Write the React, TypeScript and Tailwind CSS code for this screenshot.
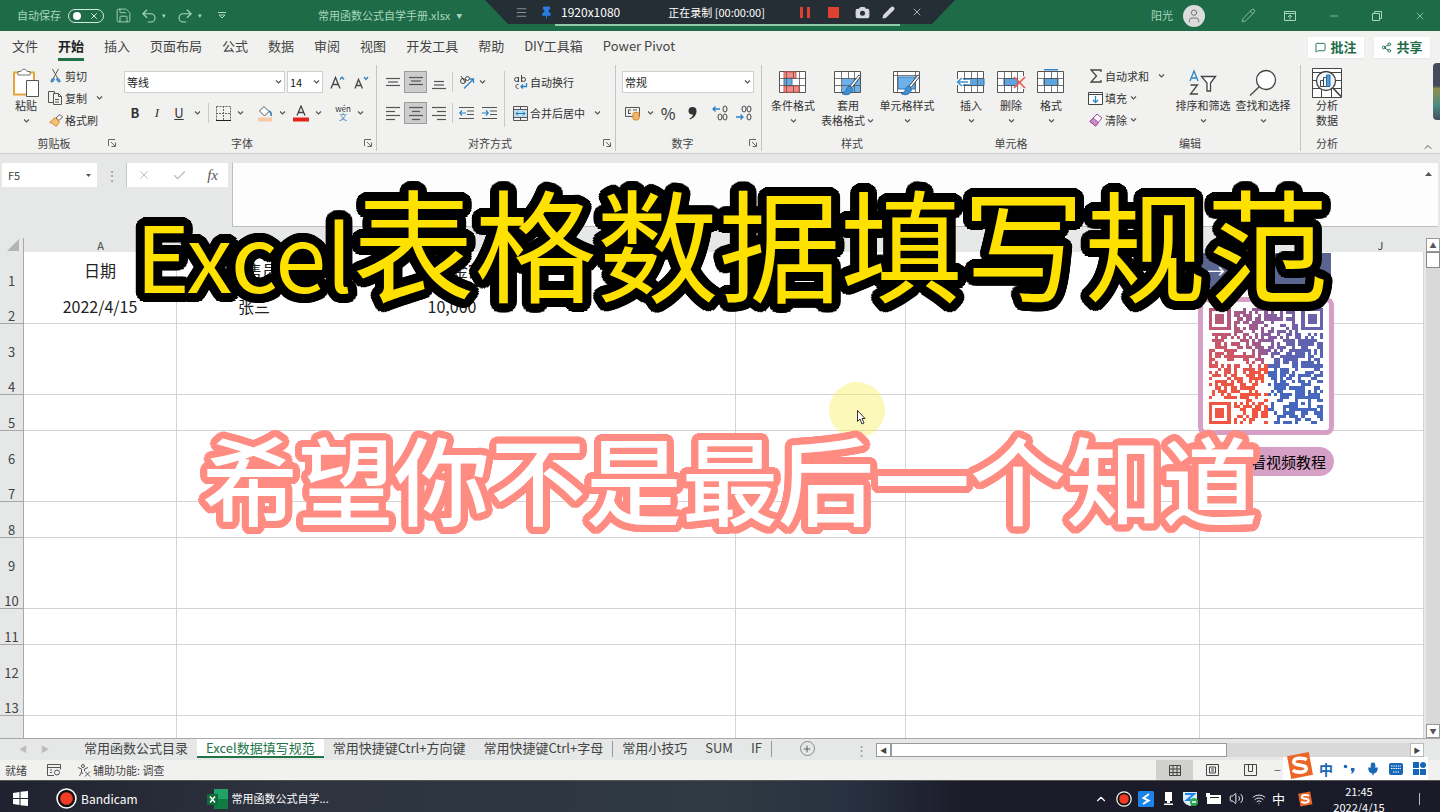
import type { ReactNode } from 'react';
import {
  Camera, Check, ChevronUp, Menu, MessageSquare, Mic, Minus, Pencil, Pin,
  Plus, Redo2, Save, Share2, Undo2, User, Volume2, Wifi, X,
} from 'lucide-react';

const MENU = ['文件', '开始', '插入', '页面布局', '公式', '数据', '审阅', '视图', '开发工具', '帮助', 'DIY工具箱', 'Power Pivot'];

/* ---------- small helpers ---------- */

function Chev({ className = 'w-3.5' }: { className?: string }) {
  return (
    <span className={`flex shrink-0 justify-center ${className}`}>
      <svg width="7" height="4" viewBox="0 0 7 4" fill="none" stroke="#555" strokeWidth="1.2">
        <path d="M1 .5 3.5 3 6 .5" />
      </svg>
    </span>
  );
}

function Tool({ label, w = 'w-5', active, children }: { label: string; w?: string; active?: boolean; children: ReactNode }) {
  return (
    <button
      aria-label={label}
      className={`flex h-[22px] shrink-0 items-center justify-center ${w} ${active ? 'border border-[#9b9b9b] bg-[#cdcdcd]' : ''}`}
    >
      {children}
    </button>
  );
}

function Combo({ label, value, w }: { label: string; value: string; w: string }) {
  return (
    <span className={`relative flex h-[22px] items-center border border-[#cfcfcf] bg-white ${w}`}>
      <select aria-label={label} className="h-full w-full appearance-none bg-transparent pl-0.5 text-[11px] text-[#222] outline-none">
        <option>{value}</option>
      </select>
      <span className="pointer-events-none absolute right-px">
        <Chev className="w-2.5" />
      </span>
    </span>
  );
}

function Group({ label, w, launcher, divider, children }: { label: string; w: string; launcher?: boolean; divider?: boolean; children: ReactNode }) {
  return (
    <section className={`flex shrink-0 py-0.5 ${w}`}>
      <div className="flex min-w-0 flex-1 flex-col">
        <div className="flex h-[72px] items-start">{children}</div>
        <div className="flex h-4 items-center text-[11px] text-[#444]">
          <span className="flex-1 text-center">{label}</span>
          {launcher && (
            <button aria-label={`${label}设置`} className="mr-1">
              <svg width="8" height="8" viewBox="0 0 8 8" fill="none" stroke="#666">
                <path d="M.5 7V.5H7M3 3l4 4M7.500 3.500v4h-4" />
              </svg>
            </button>
          )}
        </div>
      </div>
      {divider && <div className="w-px bg-[#c4c4c4]" />}
    </section>
  );
}

function Big({ icon, lines, w, caret = true }: { icon: ReactNode; lines: string[]; w: string; caret?: boolean }) {
  return (
    <button className={`flex shrink-0 flex-col items-center pt-0.5 text-[11px] leading-[15px] text-[#333] ${w}`}>
      <span className="flex h-[31px] items-center justify-center">{icon}</span>
      <span className="whitespace-nowrap">{lines[0]}</span>
      <span className="flex h-[15px] items-center whitespace-nowrap">
        {lines[1]}
        {caret && <Chev className="w-2.5" />}
      </span>
    </button>
  );
}

function Small({ icon, text, caret }: { icon: ReactNode; text: string; caret?: string }) {
  return (
    <button className="flex h-[22px] items-center whitespace-nowrap text-[11px] text-[#333]">
      <span className="flex w-[19px] justify-center">{icon}</span>
      {text}
      {caret && <Chev className={caret} />}
    </button>
  );
}

/* ---------- ribbon drawings ---------- */

function Lines({ rows }: { rows: [number, number, number][] }) {
  return (
    <svg width="14" height="16" viewBox="0 0 14 16" stroke="#555" strokeWidth="1.2">
      {rows.map(([x1, x2, y]) => <path key={y} d={`M${x1} ${y}H${x2}`} />)}
    </svg>
  );
}

const LEFT: [number, number, number][] = [[0, 14, 2.5], [0, 9, 6.5], [0, 14, 10.5], [0, 9, 14.5]];
const CENTER: [number, number, number][] = [[0, 14, 2.5], [3, 11, 6.5], [0, 14, 10.5], [3, 11, 14.5]];
const RIGHT: [number, number, number][] = [[0, 14, 2.5], [5, 14, 6.5], [0, 14, 10.5], [5, 14, 14.5]];

function Brush() {
  return (
    <>
      <path d="M28 7 19 18.500l-2-1.500L26 6z" fill="#fff" stroke="#444" />
      <path d="M17.500 17c-3 0-3.500 2-4.500 4.500-1 2-3 3-4 3 3 2 9 2 10.500-4z" fill="#3f8fd2" stroke="#2d6ea5" />
    </>
  );
}

function SheetIcon({ kind }: { kind: 'cond' | 'table' | 'style' | 'insert' | 'delete' | 'format' }) {
  return (
    <svg width="30" height="28" viewBox="0 0 30 28" fill="none" stroke="#555">
      <path d="M1.500 2.500h26v21h-26z" fill="#fff" />
      {kind === 'cond' && (
        <>
          <path d="M6 3h12v6H6zM6 17h15v6H6z" fill="#f58a83" stroke="#d65a52" />
          <path d="M6 9.500h8v7H6z" fill="#6aa7dd" stroke="#3878ae" />
        </>
      )}
      {kind === 'table' && <path d="M9 9h18v14H9z" fill="#6db1ea" stroke="none" />}
      {kind === 'style' && <path d="M6 8h17v12H6z" fill="#6db1ea" stroke="#2f79b8" />}
      {(kind === 'insert' || kind === 'delete') && <path d="M8 9.500h20v7H8z" fill="#5ea4de" stroke="#2c6fa9" />}
      {kind === 'format' && <path d="M8 9.500h14v7H8z" fill="#5ea4de" stroke="#2c6fa9" />}
      <path d={kind === 'style' ? 'M1.500 6.500h26M5.500 2.500v21M23.500 2.500v21' : 'M1.500 9.500h26M1.500 16.500h26M8.500 2.500v21M15.500 2.500v7M21.500 2.500v21M15.500 16.500v7'} strokeWidth=".8" />
      {(kind === 'table' || kind === 'style') && <Brush />}
      {kind === 'insert' && <path d="M14 13H1.500M6 8.500 1.500 13 6 17.500" stroke="#fff" strokeWidth="4" />}
      {kind === 'insert' && <path d="M12 13H1.500M6 9 1.500 13 6 17" stroke="#3d93d3" strokeWidth="1.600" />}
      {kind === 'delete' && <path d="M22 7h8v13h-8z" fill="#f1f1ef" stroke="none" />}
      {kind === 'delete' && <path d="m18 8 11 11M29 8 18 19" stroke="#e6635c" strokeWidth="1.700" />}
      {kind === 'format' && <path d="M8 .7h14" stroke="#2f86cc" strokeWidth="1.500" />}
    </svg>
  );
}

function PasteIcon() {
  return (
    <svg width="28" height="30" viewBox="0 0 28 30" fill="none">
      <path d="M2 4.500h20v22H2z" fill="#fff" stroke="#e8a33d" strokeWidth="2" />
      <path d="M6 7V3.500h3c0-3 6-3 6 0h3V7z" fill="#fff" stroke="#777" />
      <path d="M14.500 12.500h12v16h-12z" fill="#fff" stroke="#555" />
    </svg>
  );
}

function MergeIcon() {
  return (
    <svg width="15" height="15" viewBox="0 0 15 15" fill="none" stroke="#555">
      <path d="M.5.5h14v14H.5zM7.500 0v4M7.500 11v4M.5 3.500h14M.5 11.500h14" />
      <path d="M1 4h13v7H1z" fill="#bfe0f5" stroke="none" />
      <path d="M3 7.500h9M5 5.500l-2 2 2 2M10 5.500l2 2-2 2" stroke="#1f78b8" />
    </svg>
  );
}

function Indent({ out }: { out?: boolean }) {
  return (
    <svg width="15" height="14" viewBox="0 0 15 14" fill="none" stroke="#555" strokeWidth="1.2">
      <path d="M0 1.500h15M8 5h7M8 8.500h7M0 12.500h15" />
      <path d={out ? 'M7 7H.8M3 4.500.8 7 3 9.500' : 'M0 7h6M4 4.500 6.200 7 4 9.500'} stroke="#2c84c6" />
    </svg>
  );
}

function Decimal({ more }: { more?: boolean }) {
  return (
    <svg width="17" height="16" viewBox="0 0 17 16" fill="none" stroke="#444">
      <ellipse cx="13" cy="4" rx="2" ry="3" />
      {more && <ellipse cx="8" cy="4" rx="2" ry="3" />}
      <ellipse cx="13" cy="12" rx="2" ry="3" />
      {!more && <ellipse cx="8" cy="12" rx="2" ry="3" />}
      <path d={more ? 'M0 12h7M4.500 9.500 7 12l-2.500 2.500' : 'M8 4H1M3.500 1.500 1 4l2.500 2.500'} stroke="#2c84c6" strokeWidth="1.300" />
    </svg>
  );
}

function FontSize({ up }: { up?: boolean }) {
  return (
    <svg width="15" height="15" viewBox="0 0 15 15" fill="none" stroke="#444" strokeWidth="1.300">
      <path d={up ? 'M1 13.500 5.500 2.500l4.500 11M2.500 9.500h6' : 'M1 13.500 4.500 4.500l4 9M2.500 10.500h4.500'} />
      <path d={up ? 'm10 4.500 2-2.500 2 2.500' : 'm10 2 2 2.500L14 2'} stroke="#3c7fb8" />
    </svg>
  );
}

/* ---------- ribbon ---------- */

function Ribbon() {
  return (
    <div className="relative flex h-[91px] overflow-hidden border-b border-[#cfcfcd] bg-[#f1f1ef]">
      <Group label="剪贴板" w="w-[120px]" launcher>
        <div className="pl-2"><Big w="w-9" icon={<PasteIcon />} lines={['粘贴']} /></div>
        <div className="flex flex-col pl-0.5">
          <Small
            text="剪切"
            icon={
              <svg width="11" height="14" viewBox="0 0 11 14" fill="none" stroke="#555">
                <path d="m2.500 0 5 9M8.500 0l-5 9" />
                <path d="M1 13c0-3 2-4 3-3.500S4 13 1 13zM10 13c0-3-2-4-3-3.500S7 13 10 13z" fill="#5b9bd5" stroke="#2f74b5" />
              </svg>
            }
          />
          <Small
            text="复制"
            caret="w-6"
            icon={
              <svg width="15" height="14" viewBox="0 0 15 14" fill="none" stroke="#555">
                <path d="M5 11.500H.5V.5h6V3M5.500 2.500h5l3 3v8h-8zM10.500 2.500v3h3M7 8.500h4M7 11h4" />
              </svg>
            }
          />
          <Small
            text="格式刷"
            icon={
              <svg width="14" height="13" viewBox="0 0 14 13" fill="none" stroke="#555">
                <path d="m7 4 4-3.500L13.500 3 10 6.500z" fill="#fff" />
                <path d="M6 3.500 10.500 8 7 12.500C5 10 3 9 .7 8.500z" fill="#f6c07a" stroke="#d98a25" />
              </svg>
            }
          />
        </div>
      </Group>

      <Group label="字体" w="w-[257px]" launcher divider>
        <div className="flex flex-col gap-[9px] pt-1.5 pl-1">
          <div className="flex items-center">
            <Combo label="字体" value="等线" w="w-[161px]" />
            <span className="ml-0.5"><Combo label="字号" value="14" w="w-[36px]" /></span>
            <span className="ml-0.5 flex">
              <Tool label="增大字号" w="w-6"><FontSize up /></Tool>
              <Tool label="减小字号" w="w-6"><FontSize /></Tool>
            </span>
          </div>
          <div className="flex items-center text-[13px] text-[#333]">
            <Tool label="加粗" w="w-[22px]"><b>B</b></Tool>
            <Tool label="倾斜" w="w-[22px]"><i className="font-['Liberation_Serif']">I</i></Tool>
            <Tool label="下划线" w="w-[22px]"><u>U</u></Tool>
            <Chev />
            <span className="mx-1 h-5 w-px bg-[#cacaca]" />
            <Tool label="边框">
              <svg width="15" height="15" viewBox="0 0 15 15" fill="none" stroke="#666">
                <path d="M.5.5h14v14H.5zM7.500 0v15M0 7.500h15" strokeDasharray="2 1" />
                <path d="M0 14.500h15" stroke="#222" />
              </svg>
            </Tool>
            <Chev />
            <span className="ml-2" />
            <Tool label="填充颜色">
              <svg width="16" height="17" viewBox="0 0 16 17" fill="none" stroke="#555">
                <path d="M7 1.500 12 6.500 7.500 11 2.500 6z" fill="#fff" />
                <path d="M12 6c2 1 2.500 3 2 5" stroke="#2f79b8" strokeWidth="1.500" />
                <path d="M1 12.500h14v4H1z" fill="#f9c9a4" stroke="none" />
              </svg>
            </Tool>
            <Chev />
            <span className="ml-0.5" />
            <Tool label="字体颜色">
              <svg width="16" height="17" viewBox="0 0 16 17" fill="none" stroke="#444" strokeWidth="1.300">
                <path d="M4 10.500 8 1l4 9.500M5.500 7.500h5" />
                <path d="M0 12.500h16v4H0z" fill="#e02418" stroke="none" />
              </svg>
            </Tool>
            <Chev />
            <span className="ml-2" />
            <Tool label="拼音指南">
              <span className="flex flex-col items-center text-[8px] leading-[8px]">
                <span>wén</span>
                <span className="text-[#3b86c4]">文</span>
              </span>
            </Tool>
            <Chev />
          </div>
        </div>
      </Group>

      <Group label="对齐方式" w="w-[239px]" launcher divider>
        <div className="flex w-[127px] flex-col gap-[9px] pt-1.5 pl-1">
          <div className="flex items-center">
            <Tool label="顶端对齐" w="w-[23px]"><Lines rows={[[0, 14, 4.5], [2, 12, 8], [0, 14, 11.5]]} /></Tool>
            <Tool label="垂直居中" w="w-[23px]" active><Lines rows={[[0, 14, 3.5], [2, 12, 7], [0, 14, 10.5]]} /></Tool>
            <Tool label="底端对齐" w="w-[23px]"><Lines rows={[[2, 12, 7.5], [2, 12, 11], [0, 14, 14.5]]} /></Tool>
            <span className="mx-0.5 h-5 w-px bg-[#cacaca]" />
            <Tool label="方向" w="w-[23px]">
              <svg width="16" height="16" viewBox="0 0 16 16" fill="none" stroke="#444">
                <circle cx="4" cy="7" r="2.500" />
                <path d="m2 2 4.500 6.500" />
                <circle cx="8.500" cy="4.500" r="2" />
                <path d="M5 14.500 14 5.500M14.500 9V5H11" stroke="#2c84c6" strokeWidth="1.300" />
              </svg>
            </Tool>
            <Chev className="w-2" />
          </div>
          <div className="flex items-center">
            <Tool label="左对齐" w="w-[23px]"><Lines rows={LEFT} /></Tool>
            <Tool label="居中" w="w-[23px]" active><Lines rows={CENTER} /></Tool>
            <Tool label="右对齐" w="w-[23px]"><Lines rows={RIGHT} /></Tool>
            <span className="mx-0.5 h-5 w-px bg-[#cacaca]" />
            <Tool label="减少缩进量" w="w-[23px]"><Indent out /></Tool>
            <Tool label="增加缩进量" w="w-[23px]"><Indent /></Tool>
          </div>
        </div>
        <div className="mt-1.5 h-14 w-px bg-[#cacaca]" />
        <div className="flex flex-col gap-[9px] pt-1.5 pl-1.5">
          <Small
            text="自动换行"
            icon={
              <svg width="14" height="15" viewBox="0 0 14 15" fill="none" stroke="#444">
                <circle cx="2.500" cy="4.500" r="2" />
                <path d="M4.500 2v5M7.500 0v7" />
                <circle cx="9.500" cy="4.500" r="2" />
                <path d="M4.500 9.500c-3-1-4 4 0 4" />
                <path d="M12.500 8v3.500H7M9 9.500l-2 2 2 2" stroke="#2c84c6" strokeWidth="1.300" />
              </svg>
            }
          />
          <Small text="合并后居中" icon={<MergeIcon />} caret="w-6" />
        </div>
      </Group>

      <Group label="数字" w="w-[146px]" launcher divider>
        <div className="flex flex-col gap-[9px] pt-1.5 pl-1.5">
          <Combo label="数字格式" value="常规" w="w-[132px]" />
          <div className="flex items-center text-[#333]">
            <Tool label="会计数字格式" w="w-[22px]">
              <svg width="16" height="15" viewBox="0 0 16 15" fill="none" stroke="#555">
                <path d="M.5 1.500h14v9H.5zM3 4h3M3 7.500h3M3.500 4v3.500M8 4h4" />
                <path d="M8 7.500v5c0 2 6 2 6 0v-5c0-1.500-6-1.500-6 0z" fill="#f2b36d" stroke="#d98a25" />
              </svg>
            </Tool>
            <Chev className="w-3" />
            <Tool label="百分比样式" w="w-6"><span className="text-base">%</span></Tool>
            <Tool label="千位分隔样式" w="w-6">
              <svg width="9" height="13" viewBox="0 0 9 13"><path d="M4.500 0a4 4 0 0 1 4 4c0 4-2.500 7-6.500 8.500l-.5-1C3.500 10.500 5 9 5 7.500 2 8 .5 6 .5 4a4 4 0 0 1 4-4z" fill="#333" /></svg>
            </Tool>
            <span className="ml-1" />
            <Tool label="增加小数位数" w="w-6"><Decimal /></Tool>
            <Tool label="减少小数位数" w="w-6"><Decimal more /></Tool>
          </div>
        </div>
      </Group>

      <Group label="样式" w="w-[180px]">
        <div className="flex pl-[3px]">
          <Big w="w-14" icon={<SheetIcon kind="cond" />} lines={['条件格式']} />
          <Big w="w-[54px]" icon={<SheetIcon kind="table" />} lines={['套用', '表格格式']} />
          <span className="ml-0.5"><Big w="w-[60px]" icon={<SheetIcon kind="style" />} lines={['单元格样式']} /></span>
        </div>
      </Group>

      <Group label="单元格" w="w-[138px]">
        <div className="flex pl-[9px]">
          <Big w="w-10" icon={<SheetIcon kind="insert" />} lines={['插入']} />
          <Big w="w-10" icon={<SheetIcon kind="delete" />} lines={['删除']} />
          <Big w="w-10" icon={<SheetIcon kind="format" />} lines={['格式']} />
        </div>
      </Group>

      <Group label="编辑" w="w-[221px]" divider>
        <div className="flex flex-col pl-1.5">
          <Small
            text="自动求和"
            caret="w-6"
            icon={<svg width="12" height="14" viewBox="0 0 12 14" fill="none" stroke="#444" strokeWidth="1.300"><path d="M11 3V1H1l5.500 6L1 13h10v-2" /></svg>}
          />
          <Small
            text="填充"
            caret="w-3"
            icon={
              <svg width="15" height="13" viewBox="0 0 15 13" fill="none" stroke="#444">
                <path d="M.5.5h14v12H.5zM.5 2.500h14" fill="#fff" />
                <path d="M7.500 4v6M5 8l2.500 2.500L10 8" stroke="#2c84c6" strokeWidth="1.300" />
              </svg>
            }
          />
          <Small
            text="清除"
            caret="w-3"
            icon={
              <svg width="14" height="14" viewBox="0 0 14 14" fill="none" stroke="#a0479f">
                <path d="m8 1 5 4-6.500 8L1 8.500z" fill="#fff" />
                <path d="M4 5 1 8.500 6.500 13l3-3.500z" fill="#c98fcb" />
              </svg>
            }
          />
        </div>
        <div className="flex">
          <Big
            w="w-[60px]"
            lines={['排序和筛选']}
            icon={
              <svg width="30" height="28" viewBox="0 0 30 28" fill="none" stroke="#444" strokeWidth="1.300">
                <path d="m2 12 4-10 4 10M3.500 9h5" stroke="#2c84c6" />
                <path d="M2.500 16h7l-7 9h7.500" />
                <path d="M13.500 7.500h14l-5 6.500v8h-3.500v-8z" fill="#fff" />
              </svg>
            }
          />
          <Big
            w="w-[60px]"
            lines={['查找和选择']}
            icon={
              <svg width="30" height="28" viewBox="0 0 30 28" fill="none" stroke="#444" strokeWidth="1.300">
                <circle cx="18" cy="11" r="9.500" fill="#fff" />
                <path d="M11 18 2 26.500" />
              </svg>
            }
          />
        </div>
      </Group>

      <Group label="分析" w="w-[52px]">
        <Big
          w="w-[52px]"
          lines={['分析', '数据']}
          caret={false}
          icon={
            <svg width="30" height="30" viewBox="0 0 30 30" fill="none" stroke="#444">
              <path d="M.5.5h29v29H.5z" fill="#fff" />
              <path d="M.5 4.500h29M.5 12.500h29M.5 20.500h29M9.500 20v9M19.500 20v9" />
              <circle cx="14" cy="13" r="9.500" fill="#f4f7fa" strokeWidth="1.300" />
              <path d="m21 20 8 8.500" strokeWidth="1.800" />
              <path d="M8.500 12.500h3v6h-3zM11.500 9.500h3v9h-3z" />
              <path d="M14.500 7h3.500v11.500h-3.500z" fill="#4f9bd9" stroke="#2c6fa9" />
            </svg>
          }
        />
      </Group>

      <button aria-label="折叠功能区" className="mt-auto mr-1.5 ml-auto text-[#555]"><ChevronUp size={12} /></button>
      <div className="absolute top-0 right-0 h-[57px] w-[7px] rounded-l bg-[linear-gradient(#444b5c_40%,#8f8f4d_45%,#4a8a84_75%,#444b5c)]" />
    </div>
  );
}

/* ---------- title bar ---------- */

function Recorder() {
  return (
    <div className="absolute top-0 left-1/2 w-[470px] -translate-x-1/2 text-white">
      <div className="flex h-6 items-center bg-[#252d35] pr-8 pl-[30px] text-[11px] [clip-path:polygon(0_0,100%_0,calc(100%-23px)_100%,23px_100%)]">
        <Menu size={13} className="text-[#89929a]" />
        <Pin size={13} className="ml-3 fill-[#2c7de0] text-[#2c7de0]" />
        <span className="ml-2 text-xs">1920x1080</span>
        <span className="ml-12 whitespace-nowrap">正在录制 [00:00:00]</span>
        <button aria-label="暂停" className="ml-auto flex gap-1"><span className="h-[11px] w-[3px] bg-[#e0402f]" /><span className="h-[11px] w-[3px] bg-[#e0402f]" /></button>
        <button aria-label="停止" className="ml-[18px] size-[11px] bg-[#e0402f]" />
        <button aria-label="截图" className="ml-4"><Camera size={15} className="fill-[#d6dade] text-[#d6dade] [&>circle]:fill-[#252d35] [&>circle]:stroke-[#252d35]" /></button>
        <button aria-label="画笔" className="ml-3"><Pencil size={13} className="fill-[#d6dade] text-[#d6dade]" /></button>
        <button aria-label="关闭录制" className="ml-4 text-[#a9b0b6]"><X size={12} /></button>
      </div>
      <div className="mr-[55px] ml-[70px] h-0.5 bg-[#8fcaa9]" />
    </div>
  );
}

function TitleBar() {
  return (
    <header className="relative flex h-[31px] items-center overflow-hidden bg-[#1d6b47] text-[11px] text-[#a9d6bd]">
      <div className="flex items-center pl-[17px]">
        <label htmlFor="autosave">自动保存</label>
        <span className="relative ml-[7px] flex h-[14px] w-9 items-center justify-between rounded-full border border-[#d5eadf] px-1 text-white">
          <input id="autosave" type="checkbox" className="absolute inset-0 appearance-none" />
          <span className="size-2 rounded-full bg-white" />
          <X size={10} />
        </span>
        <button aria-label="保存" className="ml-[11px]"><Save size={17} strokeWidth={1.3} /></button>
        <button aria-label="撤消" className="ml-2"><Undo2 size={18} strokeWidth={1.5} /></button>
        <span className="ml-1 text-[7px]">▾</span>
        <button aria-label="恢复" className="ml-2.5"><Redo2 size={18} strokeWidth={1.5} /></button>
        <span className="ml-1 text-[7px]">▾</span>
        <svg className="ml-4" width="8" height="7" viewBox="0 0 8 7" fill="none" stroke="currentColor"><path d="M0 .5h8M1 3h6L4 6z" /></svg>
      </div>
      <span className="ml-[92px] whitespace-nowrap">常用函数公式自学手册.xlsx</span>
      <span className="ml-1.5 text-[6px]">▼</span>
      <Recorder />
      <div className="ml-auto flex items-center pr-3.5">
        <span>阳光</span>
        <span className="ml-2.5 flex size-[22px] items-center justify-center rounded-full bg-[#dcdcdc] text-[#666]"><User size={16} strokeWidth={1.3} /></span>
        <Pencil size={15} strokeWidth={1.2} className="ml-9" />
        <svg className="ml-7" width="12" height="10" viewBox="0 0 12 10" fill="none" stroke="currentColor"><path d="M.5.5h11v9H.5zM.5 2.500h11M6 8.500v-4M4 6l2-2 2 2" /></svg>
        <button aria-label="最小化" className="ml-8"><Minus size={12} strokeWidth={1.5} /></button>
        <button aria-label="还原" className="ml-8">
          <svg width="10" height="10" viewBox="0 0 10 10" fill="none" stroke="currentColor"><path d="M.5 2.500h7v7h-7zM2.500 2V.5h7v7H8" /></svg>
        </button>
        <button aria-label="关闭" className="ml-8"><X size={12} strokeWidth={1.5} /></button>
      </div>
    </header>
  );
}

function MenuBar() {
  return (
    <nav className="flex h-8 items-center gap-5 bg-[#f1f1ef] pr-2.5 pl-3 text-[13px] text-[#444]">
      {MENU.map((m) => (
        <button key={m} className={`h-7 whitespace-nowrap border-b-[3px] ${m === '开始' ? 'border-[#217346] font-bold text-[#222]' : 'border-transparent'}`}>
          {m}
        </button>
      ))}
      <div className="ml-auto flex gap-2.5 font-bold text-[#1d6b47]">
        <button className="flex h-[21px] w-14 items-center justify-center gap-1 bg-white shadow-xs"><MessageSquare size={11} />批注</button>
        <button className="flex h-[21px] w-14 items-center justify-center gap-1 bg-white shadow-xs"><Share2 size={11} />共享</button>
      </div>
    </nav>
  );
}

function FormulaBar() {
  return (
    <div className="flex items-start bg-[#e6e8e7] pt-[9px] pr-0.5 pb-[11px] pl-0.5 text-[11px]">
      <div className="relative">
        <input aria-label="名称框" defaultValue="F5" className="h-6 w-[95px] bg-white pl-1.5 text-[#444] outline-none" />
        <svg className="absolute top-[11px] right-1.5" width="5" height="3" viewBox="0 0 5 3"><path d="M0 0h5L2.500 3z" fill="#555" /></svg>
      </div>
      <span className="flex h-6 w-[29px] items-center justify-center text-sm text-[#999]">⋮</span>
      <div className="flex h-6 w-[102px] items-center justify-between border-l border-[#c5c5c5] bg-white px-2.5 text-[#b5b5b5]">
        <button aria-label="取消"><X size={14} strokeWidth={1.5} /></button>
        <button aria-label="输入"><Check size={15} strokeWidth={1.8} /></button>
        <button aria-label="插入函数" className="font-['Liberation_Serif'] text-[15px] text-[#555] italic">fx</button>
      </div>
      <div className="relative ml-1 flex-1">
        <textarea aria-label="编辑栏" className="block h-16 w-full resize-none border-b border-l border-[#bdbdbd] bg-[#fdfdfd] outline-none" />
        <svg className="absolute top-[9px] right-1.5" width="7" height="4" viewBox="0 0 7 4"><path d="M0 4 3.500 0 7 4z" fill="#555" /></svg>
      </div>
    </div>
  );
}

/* ---------- sheet ---------- */

const CELLS: Record<number, string[]> = {
  1: ['日期', '销售员', '销售金额'],
  2: ['2022/4/15', '张三', '10,000'],
};
const COLUMNS = ['A', '', '', '', '', '', '', 'J'];
// rows whose lower edge carries no grid line
const OPEN_ROWS = [3, 6, 9, 12];
const BORDERED = [0, 3, 4, 5, 7];

function Sheet() {
  return (
    <table className="w-full table-fixed border-separate border-spacing-0 bg-white text-center text-base leading-none text-[#222]">
      <colgroup>
        <col className="w-6" />
        <col className="w-[153px]" />
        <col className="w-[154px]" />
        <col className="w-[242px]" />
        <col className="w-[163px]" />
        <col className="w-[170px]" />
        <col className="w-[294px]" />
        <col className="w-[137px]" />
        <col />
      </colgroup>
      <thead>
        <tr className="bg-[#e6e8e7] text-[11px] text-[#444]">
          <th className="h-[14px] border-r border-[#a8a8a8] p-0">
            <svg className="ml-auto mr-1" width="12" height="12" viewBox="0 0 12 12"><path d="M12 0v12H0z" fill="#b4b4b4" /></svg>
          </th>
          {COLUMNS.map((c, i) => <th key={i} scope="col" className="p-0 font-normal leading-[14px]">{c}</th>)}
        </tr>
      </thead>
      <tbody>
        {Array.from({ length: 14 }, (_, i) => i + 1).map((r) => {
          const line = r > 1 && r < 14 && !OPEN_ROWS.includes(r);
          const height = r === 14 ? 'h-[22px]' : OPEN_ROWS.includes(r) ? 'h-[35px]' : 'h-9';
          return (
            <tr key={r} className={height}>
              <th scope="row" className={`border-r border-[#a8a8a8] bg-[#e6e8e7] p-0 align-bottom text-[13px] leading-[14px] font-normal text-[#444] ${line ? 'border-b' : ''}`}>
                {r < 14 ? r : ''}
              </th>
              {COLUMNS.map((_, c) => (
                <td key={c} className={`border-[#d4d4d4] p-0 ${line ? 'border-b' : ''} ${BORDERED.includes(c) ? 'border-r' : ''}`}>
                  {CELLS[r]?.[c]}
                </td>
              ))}
            </tr>
          );
        })}
      </tbody>
    </table>
  );
}

/* ---------- QR card ---------- */

const N = 37;

function finder(x: number, y: number, cx: number, cy: number, r: number) {
  const d = Math.max(Math.abs(x - cx), Math.abs(y - cy));
  if (d > r + 1) return null;
  return r === 3 ? d !== 2 && d !== 4 : d !== 1 && d !== 3;
}

function isDark(x: number, y: number) {
  for (const [cx, cy] of [[3, 3], [33, 3], [3, 33]]) {
    const f = finder(x, y, cx, cy, 3);
    if (f !== null) return f;
  }
  const a = finder(x, y, 30, 30, 2);
  if (a !== null && Math.max(Math.abs(x - 30), Math.abs(y - 30)) <= 2) return a;
  const h = Math.sin(x * 127.1 + y * 311.7) * 43758.5453;
  return h - Math.floor(h) > 0.44;
}

// colour sweeps clockwise from red at the lower left to blue at the lower right
const SWEEP = [[243, 84, 62], [238, 86, 68], [196, 88, 110], [140, 92, 155], [96, 98, 176], [70, 104, 190], [72, 102, 188]];

function moduleColor(x: number, y: number) {
  const turn = (Math.atan2(-(x - 18), y - 18) / (2 * Math.PI) + 1) % 1;
  const t = turn * (SWEEP.length - 1);
  const i = Math.min(Math.floor(t), SWEEP.length - 2);
  const mix = SWEEP[i].map((v, k) => Math.round(v + (SWEEP[i + 1][k] - v) * (t - i)));
  return `rgb(${mix.join(',')})`;
}

function QrCode() {
  const cells: ReactNode[] = [];
  for (let y = 0; y < N; y++) {
    for (let x = 0; x < N; x++) {
      if (isDark(x, y)) cells.push(<rect key={`${x}-${y}`} x={x} y={y} width="1" height="1" fill={moduleColor(x, y)} />);
    }
  }
  return <svg width="114" height="116" viewBox="0 0 37 37" preserveAspectRatio="none" shapeRendering="crispEdges">{cells}</svg>;
}

function SheetObjects() {
  return (
    <>
      <div className="absolute top-[15px] left-[1199px] h-[35px] w-[132px] bg-[#5b6690] pl-2 text-lg leading-[35px] text-white">→</div>
      <div className="absolute top-[59px] left-[1198px] flex h-[138px] w-[136px] items-center justify-center rounded-lg border-[5px] border-[#d59fc6] bg-white">
        <QrCode />
      </div>
      <div className="absolute top-[209px] left-[1198px] h-[29px] w-[136px] rounded-full bg-[#d59fc6] pr-2 text-right text-[15px] leading-[29px] text-black">
        扫码看视频教程
      </div>
      <div className="absolute top-[144px] left-[829px] size-14 rounded-full bg-[#f8ee50]/40">
        <svg className="absolute top-7 left-7" width="9" height="15" viewBox="0 0 9 15" fill="#fff" stroke="#333"><path d="M.5.5v11l2.500-2.500 2 5 2-1-2-4.500h3z" /></svg>
      </div>
    </>
  );
}

/* ---------- captions ---------- */

// outline with round corners, made of shadows set on two circles
function outline(radius: number, color: string) {
  const shadows: string[] = [];
  for (const r of [radius, radius / 2]) {
    for (let i = 0; i < 32; i++) {
      const a = (i / 32) * 2 * Math.PI;
      shadows.push(`${(Math.cos(a) * r).toFixed(1)}px ${(Math.sin(a) * r).toFixed(1)}px 0 ${color}`);
    }
  }
  return { textShadow: shadows.join(',') };
}

function Captions() {
  return (
    <div className="pointer-events-none absolute inset-x-0 top-[168px] flex flex-col items-center whitespace-nowrap">
      <h1 style={outline(9, '#000')} className="flex h-36 items-baseline pl-6 text-[122px] leading-[144px] text-[#ffe100]">
        <span className="text-[92px]">Excel</span>
        <span>表格数据填写规范</span>
      </h1>
      <p style={outline(7, '#ff8c82')} className="mt-[105px] h-[120px] pl-5 text-[96px] leading-[120px] font-medium text-white">希望你不是最后一个知道</p>
    </div>
  );
}

/* ---------- bottom bars ---------- */

function SheetTabs() {
  const tab = 'h-[17px] px-[9px] whitespace-nowrap';
  return (
    <div className="flex h-[22px] items-start border-t border-[#a8a8a8] bg-[#e6e8e7] pr-4 text-[13px] leading-none text-[#444]">
      <span className="flex w-[75px] gap-3.5 pt-1.5 pl-[19px] text-[8px] text-[#bbb]"><span>◀</span><span>▶</span></span>
      <button className={tab}>常用函数公式目录</button>
      <button className="h-[19px] border-b-2 border-[#217346] bg-white px-[9px] whitespace-nowrap text-[#217346]">Excel数据填写规范</button>
      <button className={tab}>常用快捷键Ctrl+方向键</button>
      <button className={tab}>常用快捷键Ctrl+字母</button>
      <span className="mt-0.5 h-4 w-px bg-[#999]" />
      <button className={tab}>常用小技巧</button>
      <button className={tab}>SUM</button>
      <button className={tab}>IF</button>
      <span className="mt-0.5 h-4 w-px bg-[#999]" />
      <button aria-label="新工作表" className="mt-0.5 ml-7 flex size-[15px] items-center justify-center rounded-full border border-[#888]"><Plus size={10} /></button>
      <span className="mt-1 ml-auto text-[#999]">⋮</span>
      <div className="mt-1 ml-2 flex h-[14px] w-[548px] bg-[#d9d9d9] text-[7px] leading-[12px]">
        <button aria-label="向左滚动" className="w-[15px] border border-[#999] bg-white">◀</button>
        <div className="w-[336px] border border-[#999] bg-white" />
        <button aria-label="向右滚动" className="ml-auto w-[14px] border border-[#bbb] bg-white">▶</button>
      </div>
    </div>
  );
}

function SogouLogo({ size }: { size: number }) {
  return (
    <svg width={size} height={size} viewBox="0 0 28 28" fill="none">
      <path d="M2 5 23 1l4 22-21 4z" fill="#ec6426" />
      <path d="M21 8.500C18 6.500 8.500 6 8.500 10.500c0 4.500 12.500 2 12 6.500-.5 4.500-9.500 4-13 1.500" stroke="#fff" strokeWidth="3.500" />
    </svg>
  );
}

function StatusBar() {
  return (
    <footer className="relative flex h-5 items-center bg-[#f1f1ef] pl-[5px] text-[11px] text-[#444]">
      <span>就绪</span>
      <svg className="ml-5" width="14" height="12" viewBox="0 0 14 12" fill="none" stroke="#555"><path d="M7 11.500H.5V.5h13v5M.5 3.500h13M3 6h2M3 8.500h2" /><circle cx="10" cy="8.500" r="2.500" /></svg>
      <svg className="ml-4" width="14" height="13" viewBox="0 0 14 13" fill="none" stroke="#555"><circle cx="6" cy="2" r="1.500" /><path d="M1 3.500 4.500 5v3L2.500 12M11 3.500 7.500 5v2M4.500 8 6 10M8 7.500l5 5M13 7.500l-5 5" /></svg>
      <span className="ml-0.5">辅助功能: 调查</span>
      <div className="mr-[158px] ml-auto flex h-full items-center">
        <button aria-label="普通" className="flex h-full w-[37px] items-center justify-center bg-[#d0d0cd]">
          <svg width="12" height="11" viewBox="0 0 12 11" fill="none" stroke="#444"><path d="M.5.5h11v10H.5zM0 4h12M0 7.500h12M4 0v11M8 0v11" /></svg>
        </button>
        <button aria-label="页面布局" className="flex w-[38px] justify-center">
          <svg width="13" height="12" viewBox="0 0 13 12" fill="none" stroke="#444"><path d="M.5.5h12v11H.5zM3.500 3h6v6h-6zM5 5h3M5 7h3" /></svg>
        </button>
        <button aria-label="分页预览" className="flex w-[38px] justify-center">
          <svg width="13" height="12" viewBox="0 0 13 12" fill="none" stroke="#444"><path d="M.5.5h12v11H.5zM4.500.5v7h4v-7" /></svg>
        </button>
        <button aria-label="缩小" className="ml-1"><Minus size={9} /></button>
      </div>
      <div className="absolute right-3 bottom-0 flex h-[23px] items-center bg-white pl-8 text-sm font-bold text-[#1767b8]">
        <span className="absolute -top-1.5 left-0.5"><SogouLogo size={29} /></span>
        <span className="ml-1 w-6">中</span>
        <svg className="mr-2.5" width="12" height="10" viewBox="0 0 12 10" fill="#1767b8"><circle cx="2.500" cy="2.500" r="1.800" /><path d="M8 4h3.500v2.500L9.500 9.500H8L9.200 7H8z" /></svg>
        <Mic size={14} className="w-4 fill-[#1767b8]" />
        <svg className="ml-2" width="14" height="12" viewBox="0 0 14 12"><rect width="14" height="12" rx="2" fill="#1767b8" /><path d="M2 3h10M2 5.500h10M4 9h6" stroke="#fff" strokeDasharray="1.500 .8" /></svg>
        <svg className="mr-0.5 ml-2.5" width="13" height="13" viewBox="0 0 13 13" fill="#1767b8"><path d="M0 0h6v6H0zM0 7h6v6H0zM7 7h6v6H7z" /><circle cx="10" cy="3" r="3" /></svg>
      </div>
    </footer>
  );
}

function RecordDot({ size }: { size: number }) {
  return (
    <svg width={size} height={size} viewBox="0 0 20 20"><circle cx="10" cy="10" r="9" fill="#111" stroke="#fff" strokeWidth="1.500" /><circle cx="10" cy="10" r="6" fill="#f23a25" /></svg>
  );
}

function Taskbar() {
  return (
    <div className="flex h-8 items-center overflow-hidden border-t border-[#555] bg-[linear-gradient(90deg,#20222f,#2d333f_20%,#2f3a43_50%,#283140_59%,#1b1b29_67%,#1a1b29)] pt-1 text-xs text-white">
      <svg className="ml-[13px]" width="15" height="15" viewBox="0 0 15 15" fill="#fff"><path d="M0 2l6.500-1v6H0zM7.500.8 15 0v7H7.500zM0 8h6.500v6L0 13zM7.500 8H15v7l-7.500-.8z" /></svg>
      <button className="ml-7 flex items-center gap-1"><RecordDot size={21} />Bandicam</button>
      <button className="ml-[69px] flex items-center gap-1 text-[11px]">
        <svg width="21" height="20" viewBox="0 0 21 20"><path d="M7 0h14v20H7z" fill="#21a366" /><path d="M7 10h14v10H7z" fill="#107c41" /><path d="M0 5h11v11H0z" fill="#0f6b3a" /><path d="m3 7.500 5 6M8 7.500l-5 6" stroke="#fff" strokeWidth="1.500" /></svg>
        常用函数公式自学...
      </button>
      <div className="ml-auto flex items-center">
        <ChevronUp size={14} />
        <span className="ml-2"><RecordDot size={16} /></span>
        <svg className="ml-1.5" width="16" height="16" viewBox="0 0 16 16"><rect width="16" height="16" rx="1.500" fill="#1c83ea" /><path d="M11 3 5.500 7l5 2.500L5 13" fill="none" stroke="#fff" strokeWidth="2" /></svg>
        <svg className="ml-2.5" width="9" height="14" viewBox="0 0 9 14" fill="#fff"><path d="M1 0h7v9H1zM3 9h3v2H3zM0 11.500h9V13H0z" /></svg>
        <svg className="ml-2.5" width="15" height="15" viewBox="0 0 15 15"><path d="M0 1h14v7c0 4-4 6-7 7-3-1-7-3-7-7z" fill="#dceefc" /><path d="M2 3h9L4 9h6" fill="none" stroke="#1c83ea" strokeWidth="2" /><circle cx="11" cy="11" r="4" fill="#2fa84f" /><path d="M9 11h4" stroke="#fff" strokeWidth="1.500" /></svg>
        <svg className="ml-2" width="15" height="11" viewBox="0 0 15 11"><path d="M0 0h4v2h11v9H1V4H0z" fill="#fff" /><path d="M4 4.500h9" stroke="#222" /></svg>
        <Volume2 size={15} className="ml-2" strokeWidth={1.5} />
        <Wifi size={14} className="ml-2" strokeWidth={1.5} />
        <span className="ml-1.5 text-[13px]">中</span>
        <span className="ml-3"><SogouLogo size={16} /></span>
        <div className="ml-3.5 flex h-8 w-[64px] flex-col items-center text-[11px] leading-4">
          <span>21:45</span>
          <span>2022/4/15</span>
        </div>
        <span className="mr-5 ml-7 h-3 w-px bg-[#bbb]" />
      </div>
    </div>
  );
}

export default function App() {
  return (
    <div className="relative flex h-screen flex-col overflow-hidden bg-[#e6e8e7] font-['Noto_Sans_CJK_SC',sans-serif]">
      <TitleBar />
      <MenuBar />
      <Ribbon />
      <FormulaBar />
      <main className="relative flex min-h-0 flex-1 overflow-hidden">
        <div className="min-w-0 flex-1"><Sheet /></div>
        <div className="flex w-4 flex-col items-end bg-[#e6e8e7] pl-0.5 text-[7px] text-[#555]">
          <button aria-label="向上滚动" className="h-[14px] w-full border border-[#999] bg-white">▲</button>
          <div className="h-4 w-full border border-[#888] bg-white" />
          <div className="w-full flex-1 bg-[#d9d9d9]" />
          <button aria-label="向下滚动" className="h-[14px] w-full border border-[#999] bg-white">▼</button>
        </div>
        <SheetObjects />
      </main>
      <SheetTabs />
      <StatusBar />
      <Taskbar />
      <Captions />
    </div>
  );
}
